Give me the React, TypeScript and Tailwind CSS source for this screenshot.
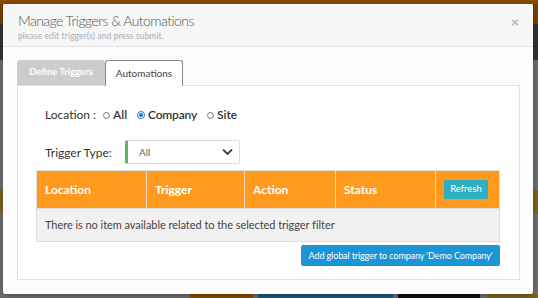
import React from "react";

export default function App() {
  const font = { fontFamily: "Lato, 'Open Sans', sans-serif" };
  return (
    <div className="relative w-[538px] h-[298px] overflow-hidden bg-[#6b6b6b]" style={font}>
      {/* dimmed page behind */}
      <div className="flex flex-col h-full">
        <div className="h-[4px] bg-[#8a4a00]" />
        <div className="h-[20px] bg-[#7a4200]" />
        <div className="h-[36px] bg-[#333333]" />
        <div className="flex-1 bg-[#6e6e6e] flex flex-col">
          <div className="h-[130px]" />
          <div className="h-[24px] bg-[#7a6520]" />
          <div className="flex-1" />
          <div className="h-[4px] flex">
            <div className="w-[190px]" />
            <div className="w-[63px] bg-[#8a4a00]" />
            <div className="w-[5px]" />
            <div className="w-[135px] bg-[#1c5a80]" />
            <div className="w-[5px]" />
            <div className="w-[82px] bg-[#111111]" />
            <div className="w-[7px]" />
            <div className="flex-1 bg-[#7a6520]" />
          </div>
        </div>
      </div>

      {/* modal */}
      <div className="absolute left-[3px] top-[4px] w-[530px] h-[290px] bg-[#fcfcfc] rounded-[2px] flex flex-col shadow-[0_2px_6px_rgba(0,0,0,0.3)]">
        <div className="h-[43px] bg-[#f6f6f6] border-b border-[#e2e2e2] flex items-start justify-between pl-[15px] pr-[14px] rounded-t-[2px]">
          <div className="flex flex-col pt-[8px]">
            <div className="text-[14px] leading-[18px] text-[#555] font-light tracking-[-0.55px]">Manage Triggers &amp; Automations</div>
            <div className="text-[8.5px] leading-[10px] text-[#a9aeb8] mt-[1px] tracking-[0.1px]">please edit trigger(s) and press submit.</div>
          </div>
          <div className="pt-[11px] text-[14px] leading-[14px] text-[#b5b5b5] font-bold">×</div>
        </div>

        <div className="flex-1 flex flex-col pl-[14px] pr-[13px] pt-[13px] pb-[14px]">
          <div className="flex h-[25px] items-stretch relative z-10">
            <div className="w-[88px] bg-[#cccccc] rounded-t-[3px] text-white font-bold text-[9.5px] flex items-center justify-center">
              Define Triggers
            </div>
            <div className="w-[78px] bg-white border border-b-0 border-[#8a8a8a] rounded-t-[3px] text-[#444] text-[10px] flex items-center justify-center h-[26px]">
              Automations
            </div>
          </div>
          <div className="flex-1 bg-white border border-[#e3e3e3] flex flex-col pl-[18px] pr-[19px]">
            <div className="flex items-center h-[20px] mt-[19px] pl-[9px] text-[12px] text-[#333]">
              <span className="w-[58px]">Location :</span>
              <label className="flex items-center">
                <span className="w-[7px] h-[7px] rounded-full border border-[#777] bg-white" />
                <span className="ml-[3px] font-semibold">All</span>
              </label>
              <label className="flex items-center ml-[10px]">
                <span className="w-[8px] h-[8px] rounded-full border border-[#1a73e8] flex items-center justify-center bg-white">
                  <span className="w-[4px] h-[4px] rounded-full bg-[#1a73e8]" />
                </span>
                <span className="ml-[3px] font-semibold tracking-[-0.2px]">Company</span>
              </label>
              <label className="flex items-center ml-[10px]">
                <span className="w-[7px] h-[7px] rounded-full border border-[#777] bg-white" />
                <span className="ml-[3px] font-semibold">Site</span>
              </label>
            </div>
            <div className="flex items-center mt-[15px] pl-[9px]">
              <span className="w-[80px] text-[12px] text-[#333] mt-[2px]">Trigger Type:</span>
              <div className="w-[115px] h-[24px] border border-[#dcdcdc] border-l-[3px] border-l-[#5cb85c] rounded-[2px] flex items-center justify-between pl-[11px] pr-[6px] bg-white">
                <span className="text-[10px] text-[#666]">All</span>
                <svg width="11" height="8" viewBox="0 0 11 8" fill="none">
                  <path d="M1.5 2l4 4 4-4" stroke="#444" strokeWidth="1.8" strokeLinecap="round" strokeLinejoin="round" />
                </svg>
              </div>
            </div>
            <div className="mt-[6px] border border-[#dddddd]">
              <div className="flex h-[37px] bg-[#ff9a1e] text-white font-bold text-[12px]">
                <div className="w-[110px] flex items-center pl-[8px] border-r border-[#f3dcc0]">Location</div>
                <div className="w-[98px] flex items-center pl-[8px] border-r border-[#f3dcc0]">Trigger</div>
                <div className="w-[91px] flex items-center pl-[8px] border-r border-[#f3dcc0]">Action</div>
                <div className="w-[100px] flex items-center pl-[8px] border-r border-[#f3dcc0]">Status</div>
                <div className="flex-1 flex items-center pl-[8px]">
                  <button className="w-[44px] h-[19px] bg-[#2eaec3] rounded-[2px] text-white text-[9.5px] font-normal">Refresh</button>
                </div>
              </div>
              <div className="h-[33px] bg-[#f1f1f1] border-t border-[#dddddd] flex items-center pl-[8px] text-[11px] text-[#444] tracking-[-0.05px]">
                There is no item available related to the selected trigger filter
              </div>
            </div>
            <div className="flex justify-end mt-[3px]">
              <button className="w-[199px] h-[21px] bg-[#1b95d3] rounded-[2px] text-white text-[9px] tracking-[-0.1px] whitespace-nowrap">
                Add global trigger to company 'Demo Company'
              </button>
            </div>
          </div>
        </div>
      </div>
    </div>
  );
}
